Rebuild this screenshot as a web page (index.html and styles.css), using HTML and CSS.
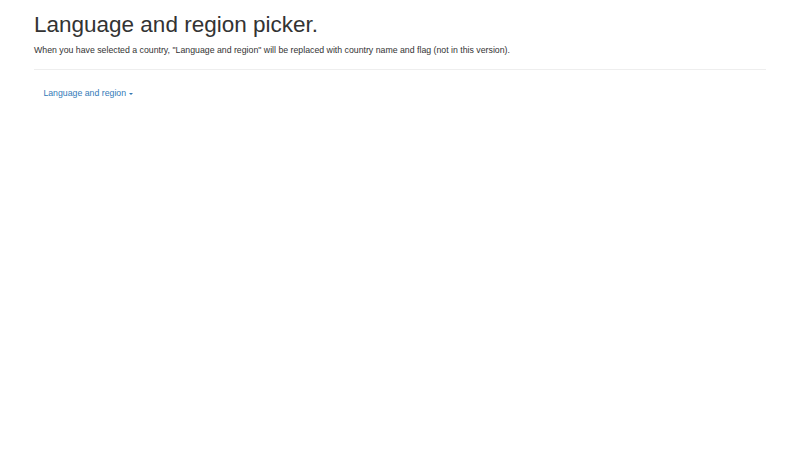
FILE: index.html
```html
<!DOCTYPE html>
<html>
<head>
<meta charset="utf-8">
<link rel="stylesheet" href="styles.css">
</head>
<body>
<div class="container">
  <h1 class="title">Language and region picker.</h1>
  <p class="lead-text">When you have selected a country, "Language and region" will be replaced with country name and flag (not in this version).</p>
  <hr class="divider">
  <ul class="nav">
    <li class="dropdown"><a href="#" class="dropdown-toggle">Language and region <span class="caret"></span></a></li>
  </ul>
</div>
</body>
</html>
```
FILE: styles.css
```css
html, body {
  margin: 0;
  padding: 0;
  background: #fff;
}
body {
  font-family: "Liberation Sans", Arial, sans-serif;
  font-size: 8.75px;
  line-height: 12.5px;
  color: #333;
}
.container {
  padding: 0 34px;
}
.title {
  font-size: 22.5px;
  font-weight: 500;
  line-height: 1.1;
  margin: 12.5px 0 6.25px 0;
  color: #333;
}
.lead-text {
  margin: 0 0 6.25px 0;
}
.divider {
  border: 0;
  border-top: 1px solid #eee;
  margin: 12.5px 0;
  height: 0;
}
.nav {
  list-style: none;
  margin: 0;
  padding: 0;
  display: flex;
}
.nav a {
  display: block;
  padding: 5px 9.4px 6.25px;
  color: #337ab7;
  text-decoration: none;
}
.caret {
  display: inline-block;
  width: 0;
  height: 0;
  margin-left: 0;
  vertical-align: middle;
  border-top: 2.5px solid;
  border-left: 2.5px solid transparent;
  border-right: 2.5px solid transparent;
}
```
